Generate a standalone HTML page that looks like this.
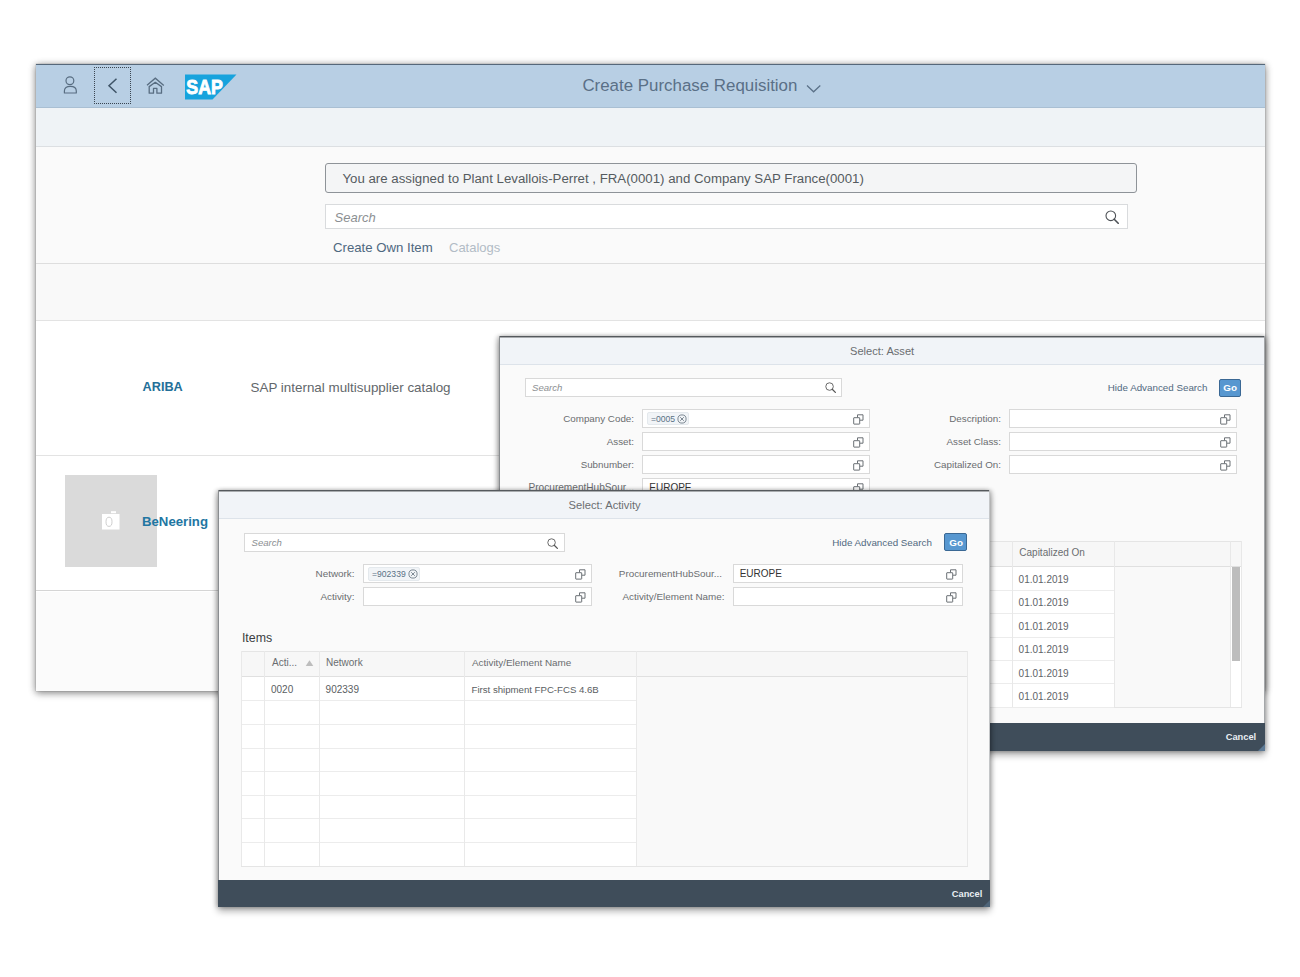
<!DOCTYPE html>
<html><head><meta charset="utf-8">
<style>
*{margin:0;padding:0;box-sizing:border-box}
html,body{width:1300px;height:977px;overflow:hidden;background:#fff;font-family:"Liberation Sans",sans-serif;color:#32363a}
.b{position:absolute;display:block}
.t{position:absolute;white-space:nowrap;line-height:1}
</style></head><body>

<div class="b" style="left:36px;top:64px;width:1229px;height:627px;background:#fafafa;box-shadow:0 3px 7px rgba(0,0,0,.3),-2px 0 7px rgba(0,0,0,.14),2px 0 7px rgba(0,0,0,.14),0 0 1px rgba(0,0,0,.4)"></div>
<div class="b" style="left:36px;top:64px;width:1229px;height:1px;background:#56687a"></div>
<div class="b" style="left:36px;top:65px;width:1229px;height:43px;background:#b8cfe4"></div>
<div class="b" style="left:36px;top:107px;width:1229px;height:1px;background:#a9bfd3"></div>
<div class="b" style="left:36px;top:108px;width:1229px;height:38px;background:#eff3f6"></div>
<div class="b" style="left:36px;top:146px;width:1229px;height:1px;background:#dcdfe2"></div>
<div class="b" style="left:36px;top:147px;width:1229px;height:116px;background:#fafafa"></div>
<div class="b" style="left:36px;top:263px;width:1229px;height:1px;background:#dedede"></div>
<div class="b" style="left:36px;top:264px;width:1229px;height:56px;background:#f9f9f9"></div>
<div class="b" style="left:36px;top:320px;width:1229px;height:1px;background:#e3e3e3"></div>
<div class="b" style="left:36px;top:321px;width:1229px;height:134px;background:#fff"></div>
<div class="b" style="left:36px;top:455px;width:1229px;height:1px;background:#e3e3e3"></div>
<div class="b" style="left:36px;top:456px;width:1229px;height:134px;background:#fff"></div>
<div class="b" style="left:36px;top:590px;width:1229px;height:1px;background:#d5d5d5"></div>
<div class="b" style="left:36px;top:591px;width:1229px;height:100px;background:#fbfbfb"></div>
<div class="b" style="left:36px;top:591px;width:1229px;height:1px;background:#ffffff"></div>
<svg class="b" style="left:60px;top:73.4px" width="22" height="24" viewBox="0 0 22 24"><circle cx="9.9" cy="7.8" r="3.9" fill="none" stroke="#586d81" stroke-width="1.2"/><path d="M4.4 20 V18 C4.4 14.8 6.6 13.4 10.3 13.4 C14 13.4 16.3 14.8 16.3 18 V20 Z" fill="none" stroke="#586d81" stroke-width="1.2" stroke-linejoin="round"/></svg>
<div class="b" style="left:94px;top:67px;width:37px;height:37px;border:1px dotted #3a4550"></div>
<svg class="b" style="left:104px;top:76px" width="18" height="20" viewBox="0 0 18 20"><path d="M12.5 2.8 L5 9.8 L12.5 16.8" fill="none" stroke="#3e5467" stroke-width="1.5"/></svg>
<svg class="b" style="left:144px;top:74px" width="24" height="24" viewBox="0 0 24 24"><path d="M3 11.3 L11.3 4.2 L19.8 11.5" fill="none" stroke="#586d81" stroke-width="1.3"/><path d="M5.2 12.6 V19.2 H9.5 V14.4 H12.9 V19.2 H17.5 V12.6 L11.3 8.3 Z" fill="none" stroke="#586d81" stroke-width="1.3" stroke-linejoin="round"/></svg>
<svg class="b" style="left:184px;top:73px" width="54" height="28" viewBox="0 0 54 28"><defs><linearGradient id="sg" x1="0" y1="0" x2="0" y2="1"><stop offset="0" stop-color="#1fa8e0"/><stop offset="1" stop-color="#0b8acb"/></linearGradient></defs><polygon points="1,1.4 52.5,1.4 28.5,26.6 1,26.6" fill="#17a3dd"/><text x="2.3" y="21.3" font-family="Liberation Sans" font-weight="bold" font-size="20.5" fill="#fff" stroke="#fff" stroke-width="0.9" textLength="36.5" lengthAdjust="spacingAndGlyphs">SAP</text></svg>
<div class="t" style="left:582.40px;top:77.99px;font-size:16.9px;color:#5a7087;font-weight:normal;font-style:normal;">Create Purchase Requisition</div>
<svg class="b" style="left:805px;top:82px" width="18" height="12" viewBox="0 0 18 12"><path d="M2 3.5 L8.6 9.8 L15.3 3.5" fill="none" stroke="#5a7087" stroke-width="1.2"/></svg>
<div class="b" style="left:325px;top:163px;width:812px;height:30px;background:#f4f5f6;border:1px solid #8e9398;border-radius:3px"></div>
<div class="t" style="left:342.40px;top:171.98px;font-size:13.25px;color:#555b60;font-weight:normal;font-style:normal;">You are assigned to Plant Levallois-Perret , FRA(0001) and Company SAP France(0001)</div>
<div class="b" style="left:325px;top:204px;width:803px;height:25px;background:#fff;border:1px solid #d9dbdd"></div>
<div class="t" style="left:334.60px;top:210.50px;font-size:13px;color:#8c8f92;font-weight:normal;font-style:italic;">Search</div>
<svg class="b" style="left:1105px;top:210px" width="14" height="14" viewBox="0 0 14 14"><circle cx="5.8" cy="5.8" r="4.8" fill="none" stroke="#4c5055" stroke-width="1.1"/><path d="M9.2 9.2 L13.2 13.2" stroke="#4c5055" stroke-width="1.6" stroke-linecap="round"/></svg>
<div class="t" style="left:333.00px;top:241.13px;font-size:13.2px;color:#4e6880;font-weight:normal;font-style:normal;">Create Own Item</div>
<div class="t" style="left:449.00px;top:241.30px;font-size:13.0px;color:#b2bcc6;font-weight:normal;font-style:normal;">Catalogs</div>
<div class="t" style="left:142.60px;top:380.65px;font-size:12.7px;color:#236f98;font-weight:bold;font-style:normal;">ARIBA</div>
<div class="t" style="left:250.60px;top:381.26px;font-size:13.4px;color:#62676b;font-weight:normal;font-style:normal;">SAP internal multisupplier catalog</div>
<div class="b" style="left:65px;top:475px;width:92px;height:92px;background:#dadada"></div>
<svg class="b" style="left:101px;top:509px" width="20" height="22" viewBox="0 0 20 22"><rect x="1" y="5" width="17.5" height="15.5" fill="#fff"/><rect x="10" y="2.2" width="5" height="2" fill="#fff"/><ellipse cx="8" cy="12.8" rx="3" ry="4.6" fill="none" stroke="#cfcfcf" stroke-width="1"/></svg>
<div class="t" style="left:142.00px;top:515.03px;font-size:13.2px;color:#2276a2;font-weight:bold;font-style:normal;">BeNeering</div>
<div class="b" style="left:499px;top:336px;width:766px;height:415px;background:#fafafa;box-shadow:0 4px 7px rgba(0,0,0,.33),-2px 0 4px rgba(0,0,0,.18),2px 0 4px rgba(0,0,0,.18)"></div>
<div class="b" style="left:499px;top:336px;width:766px;height:1px;background:#55595d"></div>
<div class="b" style="left:499px;top:337px;width:766px;height:1px;background:#a9acaf"></div>
<div class="b" style="left:499px;top:336px;width:1px;height:415px;background:#8a8d90"></div>
<div class="b" style="left:1264px;top:336px;width:1px;height:415px;background:#a4a7aa"></div>
<div class="b" style="left:500px;top:338px;width:764px;height:26px;background:#f1f4f8"></div>
<div class="b" style="left:500px;top:364px;width:764px;height:1px;background:#dde3ea"></div>
<div class="t" style="left:850.00px;top:346.20px;font-size:11.1px;color:#6b6e71;font-weight:normal;font-style:normal;">Select: Asset</div>
<div class="b" style="left:525px;top:378px;width:317px;height:19px;background:#fff;border:1px solid #d9d9d9"></div>
<div class="t" style="left:532.00px;top:382.87px;font-size:9.6px;color:#8c8f92;font-weight:normal;font-style:italic;">Search</div>
<svg class="b" style="left:825px;top:382px" width="11" height="11" viewBox="0 0 14 14"><circle cx="5.8" cy="5.8" r="4.8" fill="none" stroke="#555" stroke-width="1.1"/><path d="M9.2 9.2 L13.2 13.2" stroke="#555" stroke-width="1.6" stroke-linecap="round"/></svg>
<div class="t" style="left:1107.80px;top:383.20px;font-size:9.8px;color:#51697f;font-weight:normal;font-style:normal;">Hide Advanced Search</div>
<div class="b" style="left:1219px;top:379px;width:22px;height:18px;background:#5797d0;border:1px solid #3a6894;border-radius:2px"></div>
<div class="t" style="left:1223.30px;top:383.42px;font-size:9.9px;color:#fff;font-weight:bold;font-style:normal;">Go</div>
<div class="t" style="right:666.00px;top:414.30px;font-size:9.8px;color:#6a6d70;font-weight:normal;font-style:normal;">Company Code:</div>
<div class="b" style="left:642px;top:409px;width:228px;height:19px;background:#fff;border:1px solid #d9d9d9"></div><svg class="b" style="left:853px;top:413.5px" width="11" height="11" viewBox="0 0 11 11"><path d="M4.5 3.5 V0.8 H10 V6.2 H7" fill="none" stroke="#6b7075" stroke-width="1"/><rect x="0.7" y="3.7" width="6" height="6.4" rx="0.3" fill="#fff" stroke="#6b7075" stroke-width="1"/></svg>
<div class="t" style="right:666.00px;top:437.30px;font-size:9.8px;color:#6a6d70;font-weight:normal;font-style:normal;">Asset:</div>
<div class="b" style="left:642px;top:432px;width:228px;height:19px;background:#fff;border:1px solid #d9d9d9"></div><svg class="b" style="left:853px;top:436.5px" width="11" height="11" viewBox="0 0 11 11"><path d="M4.5 3.5 V0.8 H10 V6.2 H7" fill="none" stroke="#6b7075" stroke-width="1"/><rect x="0.7" y="3.7" width="6" height="6.4" rx="0.3" fill="#fff" stroke="#6b7075" stroke-width="1"/></svg>
<div class="t" style="right:666.00px;top:460.30px;font-size:9.8px;color:#6a6d70;font-weight:normal;font-style:normal;">Subnumber:</div>
<div class="b" style="left:642px;top:455px;width:228px;height:19px;background:#fff;border:1px solid #d9d9d9"></div><svg class="b" style="left:853px;top:459.5px" width="11" height="11" viewBox="0 0 11 11"><path d="M4.5 3.5 V0.8 H10 V6.2 H7" fill="none" stroke="#6b7075" stroke-width="1"/><rect x="0.7" y="3.7" width="6" height="6.4" rx="0.3" fill="#fff" stroke="#6b7075" stroke-width="1"/></svg>
<div class="t" style="right:666.00px;top:483.05px;font-size:10.1px;color:#6a6d70;font-weight:normal;font-style:normal;">ProcurementHubSour...</div>
<div class="b" style="left:642px;top:478px;width:228px;height:19px;background:#fff;border:1px solid #d9d9d9"></div><svg class="b" style="left:853px;top:482.5px" width="11" height="11" viewBox="0 0 11 11"><path d="M4.5 3.5 V0.8 H10 V6.2 H7" fill="none" stroke="#6b7075" stroke-width="1"/><rect x="0.7" y="3.7" width="6" height="6.4" rx="0.3" fill="#fff" stroke="#6b7075" stroke-width="1"/></svg>
<div class="b" style="left:647px;top:412px;width:42px;height:13px;background:#f1f4f7;border:1px solid #e4e9ed;border-radius:2px"></div><div class="t" style="left:651.00px;top:414.72px;font-size:8.6px;color:#5a7185;font-weight:normal;font-style:normal;">=0005</div><svg class="b" style="left:676.9px;top:413.5px" width="10" height="10" viewBox="0 0 10 10"><circle cx="5" cy="5" r="4.1" fill="none" stroke="#6f7d88" stroke-width="0.9"/><path d="M3.2 3.2 L6.8 6.8 M6.8 3.2 L3.2 6.8" stroke="#6f7d88" stroke-width="0.9"/></svg>
<div class="t" style="left:649.30px;top:483.03px;font-size:10px;color:#333;font-weight:normal;font-style:normal;">EUROPE</div>
<div class="t" style="right:299.00px;top:414.30px;font-size:9.8px;color:#6a6d70;font-weight:normal;font-style:normal;">Description:</div>
<div class="b" style="left:1009px;top:409px;width:228px;height:19px;background:#fff;border:1px solid #d9d9d9"></div><svg class="b" style="left:1220px;top:413.5px" width="11" height="11" viewBox="0 0 11 11"><path d="M4.5 3.5 V0.8 H10 V6.2 H7" fill="none" stroke="#6b7075" stroke-width="1"/><rect x="0.7" y="3.7" width="6" height="6.4" rx="0.3" fill="#fff" stroke="#6b7075" stroke-width="1"/></svg>
<div class="t" style="right:299.00px;top:437.30px;font-size:9.8px;color:#6a6d70;font-weight:normal;font-style:normal;">Asset Class:</div>
<div class="b" style="left:1009px;top:432px;width:228px;height:19px;background:#fff;border:1px solid #d9d9d9"></div><svg class="b" style="left:1220px;top:436.5px" width="11" height="11" viewBox="0 0 11 11"><path d="M4.5 3.5 V0.8 H10 V6.2 H7" fill="none" stroke="#6b7075" stroke-width="1"/><rect x="0.7" y="3.7" width="6" height="6.4" rx="0.3" fill="#fff" stroke="#6b7075" stroke-width="1"/></svg>
<div class="t" style="right:299.00px;top:460.30px;font-size:9.8px;color:#6a6d70;font-weight:normal;font-style:normal;">Capitalized On:</div>
<div class="b" style="left:1009px;top:455px;width:228px;height:19px;background:#fff;border:1px solid #d9d9d9"></div><svg class="b" style="left:1220px;top:459.5px" width="11" height="11" viewBox="0 0 11 11"><path d="M4.5 3.5 V0.8 H10 V6.2 H7" fill="none" stroke="#6b7075" stroke-width="1"/><rect x="0.7" y="3.7" width="6" height="6.4" rx="0.3" fill="#fff" stroke="#6b7075" stroke-width="1"/></svg>
<div class="b" style="left:525px;top:541px;width:717px;height:26px;background:#f7f7f7"></div>
<div class="b" style="left:525px;top:541px;width:717px;height:1px;background:#e5e5e5"></div>
<div class="b" style="left:525px;top:566px;width:717px;height:1px;background:#e0e0e0"></div>
<div class="b" style="left:525px;top:567px;width:589px;height:140px;background:#fff"></div>
<div class="b" style="left:1114px;top:567px;width:116px;height:140px;background:#f9f9f9"></div>
<div class="b" style="left:1230px;top:567px;width:12px;height:140px;background:#fff"></div>
<div class="b" style="left:525px;top:590px;width:589px;height:1px;background:#ececec"></div>
<div class="b" style="left:525px;top:613px;width:589px;height:1px;background:#ececec"></div>
<div class="b" style="left:525px;top:637px;width:589px;height:1px;background:#ececec"></div>
<div class="b" style="left:525px;top:660px;width:589px;height:1px;background:#ececec"></div>
<div class="b" style="left:525px;top:683px;width:589px;height:1px;background:#ececec"></div>
<div class="b" style="left:525px;top:707px;width:589px;height:1px;background:#ececec"></div>
<div class="b" style="left:1114px;top:707px;width:128px;height:1px;background:#e5e5e5"></div>
<div class="b" style="left:1012px;top:541px;width:1px;height:166px;background:#e8e8e8"></div>
<div class="b" style="left:1114px;top:541px;width:1px;height:166px;background:#e8e8e8"></div>
<div class="b" style="left:1230px;top:541px;width:1px;height:166px;background:#e8e8e8"></div>
<div class="b" style="left:1241px;top:541px;width:1px;height:166px;background:#e8e8e8"></div>
<div class="b" style="left:1232px;top:567px;width:8px;height:94px;background:#bdbdbd"></div>
<div class="t" style="left:1019.30px;top:547.54px;font-size:10px;color:#6a6d70;font-weight:normal;font-style:normal;">Capitalized On</div>
<div class="t" style="left:1018.60px;top:574.54px;font-size:10px;color:#606468;font-weight:normal;font-style:normal;">01.01.2019</div>
<div class="t" style="left:1018.60px;top:598.04px;font-size:10px;color:#606468;font-weight:normal;font-style:normal;">01.01.2019</div>
<div class="t" style="left:1018.60px;top:621.54px;font-size:10px;color:#606468;font-weight:normal;font-style:normal;">01.01.2019</div>
<div class="t" style="left:1018.60px;top:645.04px;font-size:10px;color:#606468;font-weight:normal;font-style:normal;">01.01.2019</div>
<div class="t" style="left:1018.60px;top:668.54px;font-size:10px;color:#606468;font-weight:normal;font-style:normal;">01.01.2019</div>
<div class="t" style="left:1018.60px;top:692.04px;font-size:10px;color:#606468;font-weight:normal;font-style:normal;">01.01.2019</div>
<div class="b" style="left:499px;top:723px;width:766px;height:28px;background:#3f4d5a"></div>
<div class="t" style="left:1225.70px;top:732.93px;font-size:9.3px;color:#e9eef2;font-weight:bold;font-style:normal;">Cancel</div>
<svg class="b" style="left:1258px;top:744px" width="7" height="7" viewBox="0 0 7 7"><polygon points="7,0 7,7 0,7" fill="#5d7a95"/></svg>
<div class="b" style="left:218px;top:490px;width:772px;height:417px;background:#fafafa;box-shadow:0 4px 7px rgba(0,0,0,.33),-2px 0 4px rgba(0,0,0,.18),2px 0 4px rgba(0,0,0,.18)"></div>
<div class="b" style="left:218px;top:490px;width:772px;height:1px;background:#55595d"></div>
<div class="b" style="left:218px;top:491px;width:772px;height:1px;background:#a9acaf"></div>
<div class="b" style="left:218px;top:490px;width:1px;height:417px;background:#8a8d90"></div>
<div class="b" style="left:989px;top:490px;width:1px;height:417px;background:#c4c6c8"></div>
<div class="b" style="left:219px;top:492px;width:770px;height:26px;background:#f1f4f8"></div>
<div class="b" style="left:219px;top:518px;width:770px;height:1px;background:#dde3ea"></div>
<div class="t" style="left:568.50px;top:499.72px;font-size:11.2px;color:#6b6e71;font-weight:normal;font-style:normal;">Select: Activity</div>
<div class="b" style="left:244px;top:533px;width:321px;height:19px;background:#fff;border:1px solid #d9d9d9"></div>
<div class="t" style="left:251.50px;top:537.67px;font-size:9.6px;color:#8c8f92;font-weight:normal;font-style:italic;">Search</div>
<svg class="b" style="left:547px;top:537.5px" width="11" height="11" viewBox="0 0 14 14"><circle cx="5.8" cy="5.8" r="4.8" fill="none" stroke="#555" stroke-width="1.1"/><path d="M9.2 9.2 L13.2 13.2" stroke="#555" stroke-width="1.6" stroke-linecap="round"/></svg>
<div class="t" style="left:832.20px;top:537.50px;font-size:9.8px;color:#51697f;font-weight:normal;font-style:normal;">Hide Advanced Search</div>
<div class="b" style="left:944px;top:533px;width:23px;height:18px;background:#5797d0;border:1px solid #3a6894;border-radius:2px"></div>
<div class="t" style="left:949.30px;top:537.62px;font-size:9.9px;color:#fff;font-weight:bold;font-style:normal;">Go</div>
<div class="t" style="right:945.50px;top:569.02px;font-size:9.9px;color:#6a6d70;font-weight:normal;font-style:normal;">Network:</div>
<div class="b" style="left:363px;top:564px;width:229px;height:19px;background:#fff;border:1px solid #d9d9d9"></div><svg class="b" style="left:575px;top:568.5px" width="11" height="11" viewBox="0 0 11 11"><path d="M4.5 3.5 V0.8 H10 V6.2 H7" fill="none" stroke="#6b7075" stroke-width="1"/><rect x="0.7" y="3.7" width="6" height="6.4" rx="0.3" fill="#fff" stroke="#6b7075" stroke-width="1"/></svg>
<div class="t" style="right:945.50px;top:592.02px;font-size:9.9px;color:#6a6d70;font-weight:normal;font-style:normal;">Activity:</div>
<div class="b" style="left:363px;top:587px;width:229px;height:19px;background:#fff;border:1px solid #d9d9d9"></div><svg class="b" style="left:575px;top:591.5px" width="11" height="11" viewBox="0 0 11 11"><path d="M4.5 3.5 V0.8 H10 V6.2 H7" fill="none" stroke="#6b7075" stroke-width="1"/><rect x="0.7" y="3.7" width="6" height="6.4" rx="0.3" fill="#fff" stroke="#6b7075" stroke-width="1"/></svg>
<div class="b" style="left:368px;top:567px;width:52px;height:13.5px;background:#f1f4f7;border:1px solid #e4e9ed;border-radius:2px"></div><div class="t" style="left:372.00px;top:569.97px;font-size:8.6px;color:#5a7185;font-weight:normal;font-style:normal;">=902339</div><svg class="b" style="left:407.9px;top:568.75px" width="10" height="10" viewBox="0 0 10 10"><circle cx="5" cy="5" r="4.1" fill="none" stroke="#6f7d88" stroke-width="0.9"/><path d="M3.2 3.2 L6.8 6.8 M6.8 3.2 L3.2 6.8" stroke="#6f7d88" stroke-width="0.9"/></svg>
<div class="t" style="right:578.00px;top:569.02px;font-size:9.9px;color:#6a6d70;font-weight:normal;font-style:normal;">ProcurementHubSour...</div>
<div class="b" style="left:733px;top:564px;width:230px;height:19px;background:#fff;border:1px solid #d9d9d9"></div><svg class="b" style="left:946px;top:568.5px" width="11" height="11" viewBox="0 0 11 11"><path d="M4.5 3.5 V0.8 H10 V6.2 H7" fill="none" stroke="#6b7075" stroke-width="1"/><rect x="0.7" y="3.7" width="6" height="6.4" rx="0.3" fill="#fff" stroke="#6b7075" stroke-width="1"/></svg>
<div class="t" style="right:575.50px;top:592.02px;font-size:9.9px;color:#6a6d70;font-weight:normal;font-style:normal;">Activity/Element Name:</div>
<div class="b" style="left:733px;top:587px;width:230px;height:19px;background:#fff;border:1px solid #d9d9d9"></div><svg class="b" style="left:946px;top:591.5px" width="11" height="11" viewBox="0 0 11 11"><path d="M4.5 3.5 V0.8 H10 V6.2 H7" fill="none" stroke="#6b7075" stroke-width="1"/><rect x="0.7" y="3.7" width="6" height="6.4" rx="0.3" fill="#fff" stroke="#6b7075" stroke-width="1"/></svg>
<div class="t" style="left:739.70px;top:569.14px;font-size:10px;color:#333;font-weight:normal;font-style:normal;">EUROPE</div>
<div class="t" style="left:241.90px;top:632.20px;font-size:12.4px;color:#3a3e42;font-weight:normal;font-style:normal;">Items</div>
<div class="b" style="left:241px;top:651px;width:727px;height:26px;background:#f7f7f7"></div>
<div class="b" style="left:241px;top:677px;width:395px;height:189px;background:#fff"></div>
<div class="b" style="left:636px;top:677px;width:332px;height:189px;background:#f9f9f9"></div>
<div class="b" style="left:241px;top:651px;width:727px;height:1px;background:#e5e5e5"></div>
<div class="b" style="left:241px;top:676px;width:727px;height:1px;background:#e0e0e0"></div>
<div class="b" style="left:241px;top:700px;width:395px;height:1px;background:#ececec"></div>
<div class="b" style="left:241px;top:724px;width:395px;height:1px;background:#ececec"></div>
<div class="b" style="left:241px;top:748px;width:395px;height:1px;background:#ececec"></div>
<div class="b" style="left:241px;top:771px;width:395px;height:1px;background:#ececec"></div>
<div class="b" style="left:241px;top:795px;width:395px;height:1px;background:#ececec"></div>
<div class="b" style="left:241px;top:818px;width:395px;height:1px;background:#ececec"></div>
<div class="b" style="left:241px;top:842px;width:395px;height:1px;background:#ececec"></div>
<div class="b" style="left:241px;top:866px;width:727px;height:1px;background:#e5e5e5"></div>
<div class="b" style="left:241px;top:651px;width:1px;height:215px;background:#e9e9e9"></div>
<div class="b" style="left:264px;top:651px;width:1px;height:215px;background:#e9e9e9"></div>
<div class="b" style="left:319px;top:651px;width:1px;height:215px;background:#e9e9e9"></div>
<div class="b" style="left:464px;top:651px;width:1px;height:215px;background:#e9e9e9"></div>
<div class="b" style="left:636px;top:651px;width:1px;height:215px;background:#e9e9e9"></div>
<div class="b" style="left:967px;top:651px;width:1px;height:215px;background:#e9e9e9"></div>
<div class="t" style="left:272.00px;top:657.54px;font-size:10px;color:#6a6d70;font-weight:normal;font-style:normal;">Acti...</div>
<svg class="b" style="left:305px;top:659px" width="9" height="8" viewBox="0 0 9 8"><polygon points="4.5,1.3 8.3,7 0.7,7" fill="#bdbdbd"/></svg>
<div class="t" style="left:326.00px;top:657.54px;font-size:10px;color:#6a6d70;font-weight:normal;font-style:normal;">Network</div>
<div class="t" style="left:472.00px;top:657.62px;font-size:9.9px;color:#6a6d70;font-weight:normal;font-style:normal;">Activity/Element Name</div>
<div class="t" style="left:271.00px;top:684.54px;font-size:10px;color:#5a5e62;font-weight:normal;font-style:normal;">0020</div>
<div class="t" style="left:325.60px;top:684.54px;font-size:10px;color:#5a5e62;font-weight:normal;font-style:normal;">902339</div>
<div class="t" style="left:471.50px;top:684.83px;font-size:9.65px;color:#5a5e62;font-weight:normal;font-style:normal;">First shipment FPC-FCS 4.6B</div>
<div class="b" style="left:218px;top:880px;width:772px;height:27px;background:#3f4d5a"></div>
<div class="t" style="left:951.80px;top:890.13px;font-size:9.3px;color:#e9eef2;font-weight:bold;font-style:normal;">Cancel</div>
<svg class="b" style="left:983px;top:900px" width="7" height="7" viewBox="0 0 7 7"><polygon points="7,0 7,7 0,7" fill="#4f6579"/></svg>
</body></html>
